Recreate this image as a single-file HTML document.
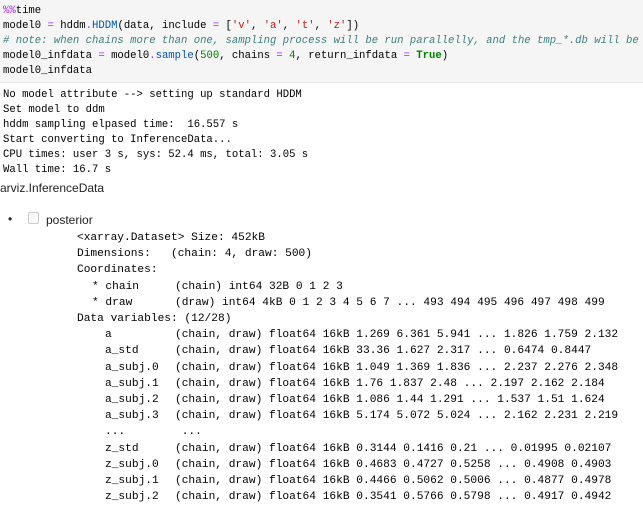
<!DOCTYPE html>
<html><head><style>
body{margin:0;width:643px;height:505px;overflow:hidden;background:#fff;position:relative;font-family:"Liberation Mono",monospace;color:#000}
.cell{position:absolute;left:0;top:0;width:643px;height:82px;background:#f5f5f5;border-bottom:1px solid #e6e6e6}
.l{position:absolute;white-space:pre;font-size:10.6px;line-height:15px}
.s{position:absolute;white-space:pre;font-size:11.2px;line-height:16.2px}
.m{color:#aa22ff}.c{color:#408080;font-style:italic}.st{color:#ba2121}.n{color:#008000}.b{color:#008000;font-weight:bold}.f{color:#0055aa}
.sans{position:absolute;font-family:"Liberation Sans",sans-serif;font-size:12px;white-space:pre;color:#222}
</style></head><body>
<div class="cell"></div>
<div class="l" style="left:3px;top:4px"><span class="m">%%</span>time</div>
<div class="l" style="left:3px;top:19px">model0 <span class="m">=</span> hddm<span class="m">.</span><span class="f">HDDM</span>(data, include <span class="m">=</span> [<span class="st">'v'</span>, <span class="st">'a'</span>, <span class="st">'t'</span>, <span class="st">'z'</span>])</div>
<div class="l c" style="left:3px;top:34px"># note: when chains more than one, sampling process will be run parallelly, and the tmp_*.db will be</div>
<div class="l" style="left:3px;top:49px">model0_infdata <span class="m">=</span> model0<span class="m">.</span><span class="f">sample</span>(<span class="n">500</span>, chains <span class="m">=</span> <span class="n">4</span>, return_infdata <span class="m">=</span> <span class="b">True</span>)</div>
<div class="l" style="left:3px;top:64px">model0_infdata</div>
<div class="l" style="left:3px;top:88px">No model attribute --&gt; setting up standard HDDM
Set model to ddm
hddm sampling elpased time:  16.557 s
Start converting to InferenceData...
CPU times: user 3 s, sys: 52.4 ms, total: 3.05 s
Wall time: 16.7 s</div>
<div class="sans" style="left:0;top:181px">arviz.InferenceData</div>
<div class="sans" style="left:8px;top:212px">•</div>
<div style="position:absolute;left:28px;top:212px;width:9px;height:10px;border:1px solid #ccc;border-radius:2px;background:#f8f8f8"></div>
<div class="sans" style="left:46px;top:213px">posterior</div>
<div class="s" style="left:77px;top:230px">&lt;xarray.Dataset&gt; Size: 452kB
Dimensions:   (chain: 4, draw: 500)
Coordinates:</div>
<div class="s" style="left:92px;top:278.6px">* chain
* draw</div>
<div class="s" style="left:175px;top:278.6px">(chain) int64 32B 0 1 2 3
(draw) int64 4kB 0 1 2 3 4 5 6 7 ... 493 494 495 496 497 498 499</div>
<div class="s" style="left:77px;top:311px">Data variables: (12/28)</div>
<div class="s" style="left:105px;top:327.2px">a
a_std
a_subj.0
a_subj.1
a_subj.2
a_subj.3
...
z_std
z_subj.0
z_subj.1
z_subj.2</div>
<div class="s" style="left:175px;top:327.2px">(chain, draw) float64 16kB 1.269 6.361 5.941 ... 1.826 1.759 2.132
(chain, draw) float64 16kB 33.36 1.627 2.317 ... 0.6474 0.8447
(chain, draw) float64 16kB 1.049 1.369 1.836 ... 2.237 2.276 2.348
(chain, draw) float64 16kB 1.76 1.837 2.48 ... 2.197 2.162 2.184
(chain, draw) float64 16kB 1.086 1.44 1.291 ... 1.537 1.51 1.624
(chain, draw) float64 16kB 5.174 5.072 5.024 ... 2.162 2.231 2.219
 ...
(chain, draw) float64 16kB 0.3144 0.1416 0.21 ... 0.01995 0.02107
(chain, draw) float64 16kB 0.4683 0.4727 0.5258 ... 0.4908 0.4903
(chain, draw) float64 16kB 0.4466 0.5062 0.5006 ... 0.4877 0.4978
(chain, draw) float64 16kB 0.3541 0.5766 0.5798 ... 0.4917 0.4942</div>
</body></html>
